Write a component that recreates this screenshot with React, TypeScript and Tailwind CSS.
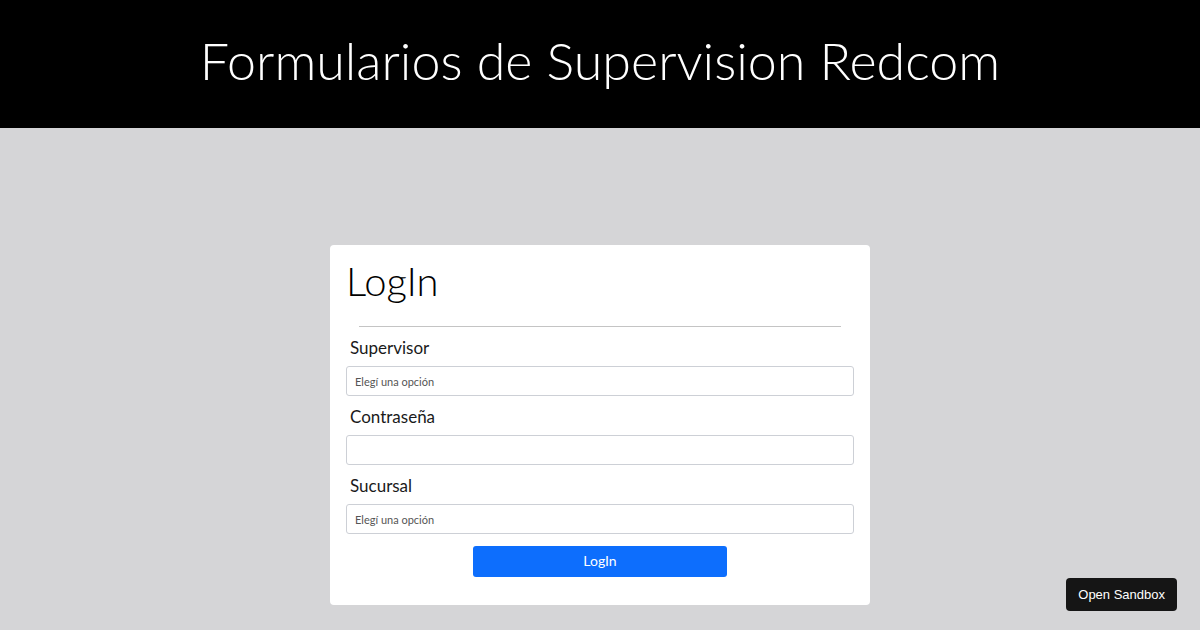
import { useState } from 'react';

const font = { fontFamily: 'Lato, "Noto Sans", sans-serif' };

const Field = ({ label, placeholder, type = 'text' }: { label: string; placeholder?: string; type?: string }) => (
  <div className="flex flex-col">
    <label className="pl-[4px] text-[17px] leading-[24px] text-[#1a1a1a]">{label}</label>
    <input
      type={type}
      placeholder={placeholder}
      className="mt-[6px] h-[30px] w-full rounded-[3px] border border-[#cdd0d6] bg-white px-[8px] text-[11px] text-[#333] placeholder:text-[#555] outline-none"
    />
  </div>
);

export default function App() {
  const [pass, setPass] = useState('');
  return (
    <div className="flex min-h-[630px] flex-col bg-[#d5d5d7]" style={font}>
      {/* header */}
      <header className="flex h-[128px] items-center justify-center bg-black pb-[9px]">
        <h1 className="text-[52px] font-light leading-none text-white">Formularios de Supervision Redcom</h1>
      </header>

      <main className="relative flex flex-1 justify-center pt-[117px]">
        <div className="flex h-[360px] w-[540px] flex-col rounded-[4px] bg-white px-[16px] pt-[12px]">
          <h2 className="text-[40px] font-light leading-[48px] text-black">LogIn</h2>
          <hr className="mx-[13px] mt-[21px] border-t border-[#c4c4c4]" />
          <div className="mt-[9px] flex flex-col gap-[9px]">
            <Field label="Supervisor" placeholder="Elegí una opción" />
            <div className="flex flex-col">
              <label className="pl-[4px] text-[17px] leading-[24px] text-[#1a1a1a]">Contraseña</label>
              <input
                type="password"
                value={pass}
                onChange={(e) => setPass(e.target.value)}
                className="mt-[6px] h-[30px] w-full rounded-[3px] border border-[#cdd0d6] bg-white px-[8px] text-[11px] outline-none"
              />
            </div>
            <Field label="Sucursal" placeholder="Elegí una opción" />
          </div>
          <div className="mt-[12px] flex justify-center">
            <button className="h-[31px] w-[254px] rounded-[3px] bg-[#0d6efd] pb-[2px] text-[14px] text-white">LogIn</button>
          </div>
        </div>

        <button
          className="absolute bottom-[19px] right-[23px] h-[33px] rounded-[4px] bg-[#151515] px-[12px] text-[13px] text-white"
          style={{ fontFamily: '"Liberation Sans", Arial, sans-serif' }}
        >
          Open Sandbox
        </button>
      </main>
    </div>
  );
}
